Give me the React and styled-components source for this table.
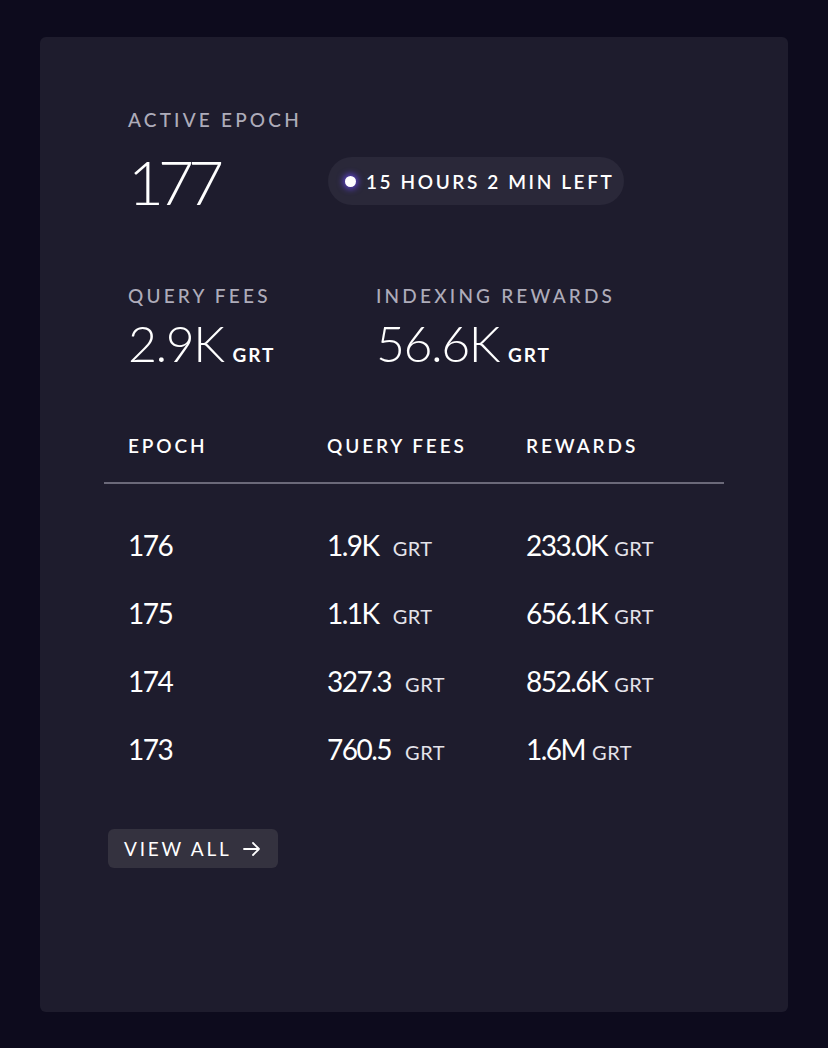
import styled, { createGlobalStyle } from "styled-components";

const GlobalStyle = createGlobalStyle`
  html, body {
    margin: 0;
    padding: 0;
    background: #0d0b1d;
  }
  body {
    font-family: Lato, "Open Sans", sans-serif;
    color: #ffffff;
  }
`;

const rows = [
  { epoch: "176", fees: "1.9K", rewards: "233.0K" },
  { epoch: "175", fees: "1.1K", rewards: "656.1K" },
  { epoch: "174", fees: "327.3", rewards: "852.6K" },
  { epoch: "173", fees: "760.5", rewards: "1.6M" },
];

const App = () => {
  return (
    <Page>
      <GlobalStyle />
      <Card>
        <Label>Active epoch</Label>
        <EpochRow>
          <BigNumber>177</BigNumber>
          <Pill>
            <Dot />
            15 hours 2 min left
          </Pill>
        </EpochRow>

        <Stats>
          <Stat>
            <Label>Query fees</Label>
            <Amount>
              2.9K<Unit>GRT</Unit>
            </Amount>
          </Stat>
          <Stat>
            <Label>Indexing rewards</Label>
            <Amount>
              56.6K<Unit>GRT</Unit>
            </Amount>
          </Stat>
        </Stats>

        <Table>
          <HeadRow>
            <Th>Epoch</Th>
            <Th>Query fees</Th>
            <Th>Rewards</Th>
          </HeadRow>
          {rows.map((r) => (
            <Row key={r.epoch}>
              <Td>{r.epoch}</Td>
              <Td>
                {r.fees}
                <RowUnit $gap={14}>GRT</RowUnit>
              </Td>
              <Td>
                {r.rewards}
                <RowUnit $gap={7}>GRT</RowUnit>
              </Td>
            </Row>
          ))}
        </Table>

        <ViewAll>
          View all
          <svg width="20" height="16" viewBox="0 0 20 16" fill="none">
            <path
              d="M2 8h15M11 2l6 6-6 6"
              stroke="#ffffff"
              strokeWidth="1.8"
              strokeLinecap="round"
              strokeLinejoin="round"
            />
          </svg>
        </ViewAll>
      </Card>
    </Page>
  );
};

const Page = styled.div`
  width: 828px;
  height: 1048px;
  padding: 37px 40px 36px 40px;
  box-sizing: border-box;
`;

const Card = styled.div`
  height: 975px;
  box-sizing: border-box;
  background: #1e1c2d;
  border-radius: 6px;
  padding: 71px 64px 0 88px;
  display: flex;
  flex-direction: column;
`;

const Label = styled.div`
  font-size: 19px;
  line-height: 24px;
  letter-spacing: 3.2px;
  text-transform: uppercase;
  color: #aeacba;
  font-weight: 500;
`;

const EpochRow = styled.div`
  display: flex;
  align-items: center;
  margin-top: 18px;
`;

const BigNumber = styled.div`
  width: 200px;
  font-size: 62px;
  line-height: 62px;
  font-weight: 300;
  letter-spacing: -6px;
`;

const Pill = styled.div`
  display: flex;
  align-items: center;
  gap: 10px;
  height: 48px;
  padding: 0 10px 0 17px;
  border-radius: 24px;
  background: #2a2839;
  font-size: 19px;
  font-weight: 600;
  letter-spacing: 2.6px;
  text-transform: uppercase;
  color: #ffffff;
`;

const Dot = styled.span`
  width: 11px;
  height: 11px;
  border-radius: 50%;
  background: #ffffff;
  box-shadow: 0 0 6px 2px rgba(111, 76, 255, 0.75);
`;

const Stats = styled.div`
  display: flex;
  margin-top: 72px;
`;

const Stat = styled.div`
  width: 248px;
  display: flex;
  flex-direction: column;
  gap: 10px;
`;

const Amount = styled.div`
  font-size: 50px;
  line-height: 50px;
  font-weight: 300;
  letter-spacing: -1.5px;
  display: flex;
  align-items: baseline;
`;

const Unit = styled.span`
  font-size: 19px;
  font-weight: 700;
  letter-spacing: 2px;
  margin-left: 9px;
`;

const Table = styled.div`
  margin: 54px 0 0 -24px;
  width: 620px;
`;

const HeadRow = styled.div`
  display: grid;
  grid-template-columns: 199px 199px 1fr;
  padding: 0 0 24px 24px;
  border-bottom: 2px solid #6b6979;
  margin-bottom: 27px;
`;

const Th = styled.div`
  font-size: 19px;
  line-height: 24px;
  font-weight: 600;
  letter-spacing: 2.9px;
  text-transform: uppercase;
  color: #ffffff;
`;

const Row = styled.div`
  display: grid;
  grid-template-columns: 199px 199px 1fr;
  padding-left: 24px;
  height: 68px;
  align-items: center;
`;

const Td = styled.div`
  font-size: 28px;
  font-weight: 400;
  letter-spacing: -1.5px;
  color: #ffffff;
  display: flex;
  align-items: baseline;
`;

const RowUnit = styled.span`
  font-size: 20px;
  font-weight: 400;
  letter-spacing: 0.5px;
  margin-left: ${(p) => p.$gap}px;
  color: #e4e3ea;
`;

const ViewAll = styled.div`
  align-self: flex-start;
  margin: 46px 0 0 -20px;
  height: 39px;
  padding: 0 16px;
  display: flex;
  align-items: center;
  gap: 10px;
  border-radius: 6px;
  background: #34323f;
  font-size: 19px;
  letter-spacing: 2.8px;
  text-transform: uppercase;
  color: #ffffff;
  cursor: pointer;
`;

export default App;
